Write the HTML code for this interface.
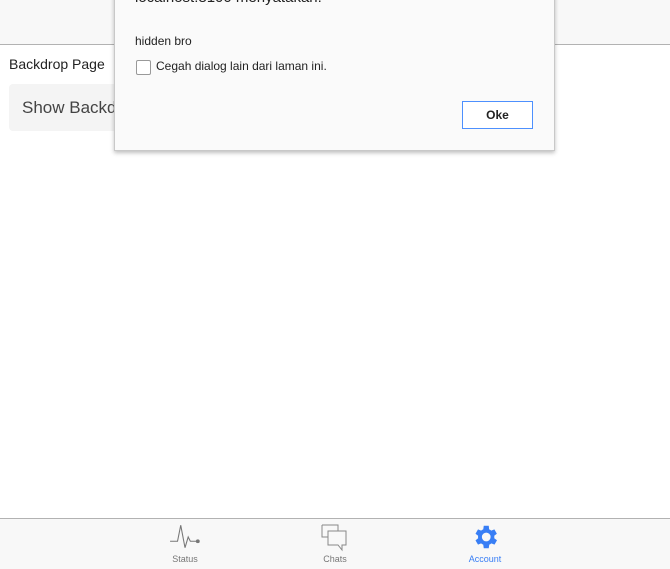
<!DOCTYPE html>
<html><head><style>
body{margin:0;width:670px;height:568px;position:relative;background:#fff;font-family:"Liberation Sans",sans-serif;overflow:hidden}
.hdr{position:absolute;left:0;top:0;width:670px;height:44px;background:#f8f8f8;border-bottom:1px solid #b2b2b2}
.t{position:absolute;left:9px;top:56px;font-size:14px;color:#222}
.btn{position:absolute;left:9px;top:84px;width:200px;height:47px;background:#f4f4f4;border-radius:4px;font-size:17px;color:#444;line-height:47px;padding-left:13px;box-sizing:border-box}
.dlg{position:absolute;left:114px;top:-10px;width:441px;height:161px;background:#fafafa;border:1px solid #c8c8c8;box-shadow:0 2px 4px rgba(0,0,0,.25);box-sizing:border-box}
.dt{position:absolute;left:20px;top:-2px;font-size:15px;color:#222}
.msg{position:absolute;left:20px;top:43px;font-size:12px;color:#222}
.cb{position:absolute;left:21px;top:69px;width:13px;height:13px;border:1px solid #999;border-radius:2px;background:#fff}
.cl{position:absolute;left:41px;top:68px;font-size:12px;color:#222}
.ok{position:absolute;left:347px;top:110px;width:71px;height:28px;border:1px solid #4d90fe;background:#fff;box-sizing:border-box;font-size:12px;font-weight:bold;text-align:center;line-height:26px;color:#222}
.tabs{position:absolute;left:0;top:518px;width:670px;height:50px;background:#f8f8f8;border-top:1px solid #b2b2b2}
.tab{position:absolute;top:0;width:100px;text-align:center;font-size:9px;color:#777}
.tab svg{display:block;margin:3px auto 0}
.tab span{position:absolute;left:0;right:0;top:35px}
</style></head><body>
<div class="hdr"></div>
<div class="t">Backdrop Page</div>
<div class="btn">Show Backdrop</div>
<div class="dlg">
<div class="dt">localhost:8100 menyatakan:</div>
<div class="msg">hidden bro</div>
<div class="cb"></div>
<div class="cl">Cegah dialog lain dari laman ini.</div>
<div class="ok">Oke</div>
</div>
<div class="tabs">
<div class="tab" style="left:135px"><svg width="32" height="30" viewBox="0 0 30 28"><path d="M1 18H8L11 3L15 24L18 14L20 18H27" fill="none" stroke="#777" stroke-width="1"/><circle cx="27" cy="18" r="1.8" fill="#777"/></svg><span>Status</span></div>
<div class="tab" style="left:285px"><svg width="30" height="30" viewBox="0 0 30 28"><path d="M2 2H18V8M8 14H2V2" fill="none" stroke="#888"/><path d="M8 8H26V22H22V27L18 22H8Z" fill="none" stroke="#888"/></svg><span>Chats</span></div>
<div class="tab" style="left:435px;color:#387ef5"><svg width="30" height="30" viewBox="0 0 24 24"><path fill="#387ef5" d="M19.4 13c.04-.33.06-.66.06-1s-.02-.67-.06-1l2.1-1.65-2-3.46-2.5 1a7.3 7.3 0 00-1.7-1L15 3h-4l-.4 2.9c-.6.25-1.17.58-1.7 1l-2.5-1-2 3.46L6.5 11c-.04.33-.06.66-.06 1s.02.67.06 1l-2.1 1.65 2 3.46 2.5-1c.53.4 1.1.74 1.7 1L11 21h4l.4-2.9c.6-.25 1.17-.58 1.7-1l2.5 1 2-3.46zM13 15.5a3.5 3.5 0 110-7 3.5 3.5 0 010 7z"/></svg><span>Account</span></div>
</div>
</body></html>
